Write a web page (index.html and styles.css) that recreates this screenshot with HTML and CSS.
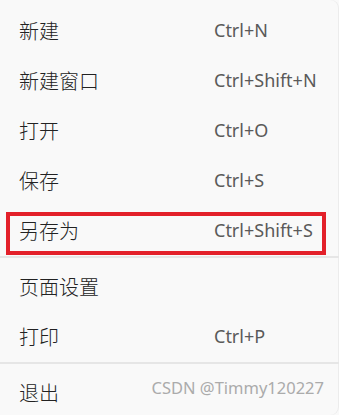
FILE: index.html
```html
<!DOCTYPE html>
<html lang="zh-CN">
<head>
<meta charset="utf-8">
<link rel="stylesheet" href="styles.css">
</head>
<body>
<div class="menu">
  <div class="item"><span class="label">新建</span><span class="key">Ctrl+N</span></div>
  <div class="item"><span class="label">新建窗口</span><span class="key">Ctrl+Shift+N</span></div>
  <div class="item"><span class="label">打开</span><span class="key">Ctrl+O</span></div>
  <div class="item"><span class="label">保存</span><span class="key">Ctrl+S</span></div>
  <div class="item marked"><span class="label">另存为</span><span class="key">Ctrl+Shift+S</span></div>
  <div class="sep"></div>
  <div class="item"><span class="label">页面设置</span><span class="key"></span></div>
  <div class="item"><span class="label">打印</span><span class="key">Ctrl+P</span></div>
  <div class="sep"></div>
  <div class="item"><span class="label">退出</span><span class="key"></span></div>
  <div class="watermark">CSDN @Timmy120227</div>
</div>
</body>
</html>
```

FILE: styles.css
```css
html, body {
  margin: 0;
  padding: 0;
  background: #f9f9f9;
}
body {
  width: 339px;
  height: 415px;
  overflow: hidden;
  font-family: "Noto Sans", "Noto Sans CJK SC", sans-serif;
}
.menu {
  position: relative;
  height: 415px;
  box-sizing: border-box;
  padding-top: 5px;
  background: #f9f9f9;
  border-top-right-radius: 8px;
  border-bottom-right-radius: 8px;
  box-shadow: inset -1px 0 0 #ececec;
}
.item {
  display: flex;
  align-items: center;
  height: 50px;
  padding-left: 19px;
}
.label {
  flex: 0 0 195px;
  font-family: "Noto Sans CJK SC", sans-serif;
  font-size: 20px;
  font-weight: 300;
  color: #222222;
}
.key {
  font-size: 18px;
  color: #5a5a5a;
}
.marked {
  position: relative;
}
.marked::after {
  content: "";
  position: absolute;
  left: 6px;
  top: 7px;
  width: 320px;
  height: 43px;
  box-sizing: border-box;
  border: 4px solid #e3202a;
}
.sep {
  height: 2px;
  background: #e6e6e6;
  margin: 1px 0 3px;
}
.watermark {
  position: absolute;
  right: 15px;
  bottom: 16px;
  font-size: 16.5px;
  color: #ababab;
}
```
